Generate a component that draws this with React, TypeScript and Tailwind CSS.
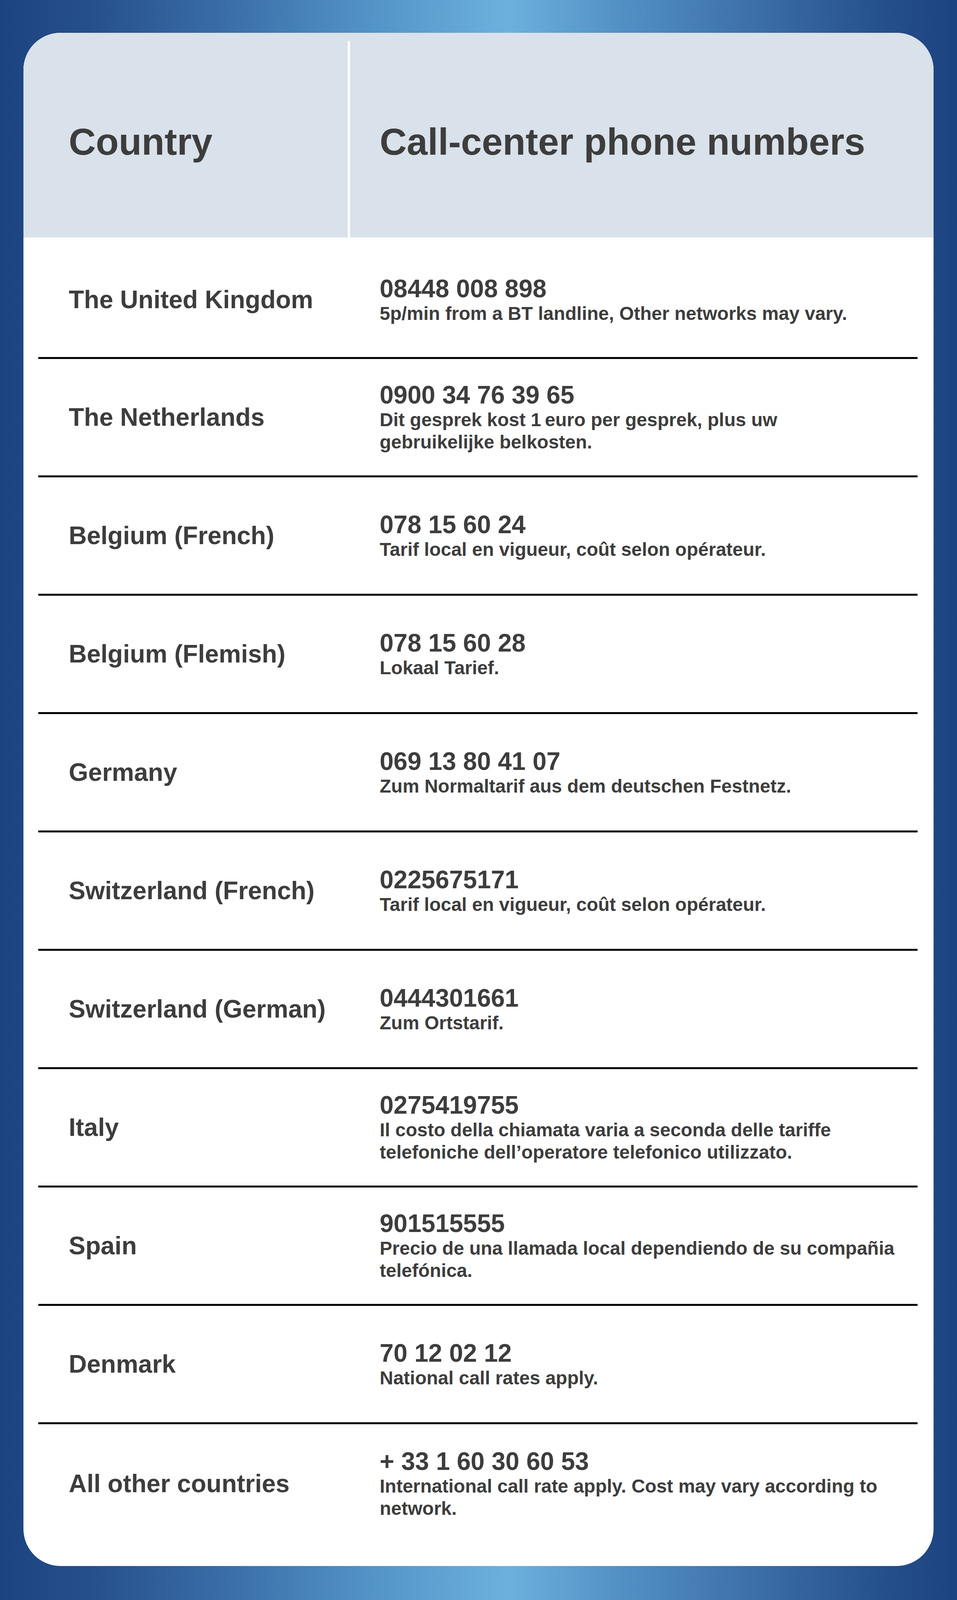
type Row = {
  country: string;
  phone: string;
  notes: string[];
};

const rows: Row[] = [
  { country: 'The United Kingdom', phone: '08448 008 898', notes: ['5p/min from a BT landline, Other networks may vary.'] },
  {
    country: 'The Netherlands',
    phone: '0900 34 76 39 65',
    notes: ['Dit gesprek kost 1\u2009euro per gesprek, plus uw', 'gebruikelijke belkosten.'],
  },
  { country: 'Belgium (French)', phone: '078 15 60 24', notes: ['Tarif local en vigueur, coût selon opérateur.'] },
  { country: 'Belgium (Flemish)', phone: '078 15 60 28', notes: ['Lokaal Tarief.'] },
  { country: 'Germany', phone: '069 13 80 41 07', notes: ['Zum Normaltarif aus dem deutschen Festnetz.'] },
  { country: 'Switzerland (French)', phone: '0225675171', notes: ['Tarif local en vigueur, coût selon opérateur.'] },
  { country: 'Switzerland (German)', phone: '0444301661', notes: ['Zum Ortstarif.'] },
  {
    country: 'Italy',
    phone: '0275419755',
    notes: ['Il costo della chiamata varia a seconda delle tariffe', 'telefoniche dell’operatore telefonico utilizzato.'],
  },
  {
    country: 'Spain',
    phone: '901515555',
    notes: ['Precio de una llamada local dependiendo de su compañia', 'telefónica.'],
  },
  { country: 'Denmark', phone: '70 12 02 12', notes: ['National call rates apply.'] },
  {
    country: 'All other countries',
    phone: '+ 33 1 60 30 60 53',
    notes: ['International call rate apply. Cost may vary according to', 'network.'],
  },
];

function TableRow({ row, first, last }: { row: Row; first: boolean; last: boolean }) {
  return (
    <div
      className={`flex items-center ${first ? 'h-[311px] pt-[12px]' : 'h-[303px]'} ${
        last ? 'h-[298px]' : 'border-b-[5px] border-black'
      }`}
    >
      <div className="w-[796px] pl-[78px] text-[64px] font-bold leading-[70px]">{row.country}</div>
      <div className="flex-1 pl-[78px]">
        <div className="text-[64px] font-bold leading-[70px]">{row.phone}</div>
        {row.notes.map((line) => (
          <div key={line} className="whitespace-nowrap text-[48px] font-bold leading-[57px]">
            {line}
          </div>
        ))}
      </div>
    </div>
  );
}

export default function App() {
  return (
    <div
      className="h-[4100px] w-[2450px] bg-[linear-gradient(90deg,#1c4380_0%,#26508c_10%,#3c71ab_25%,#5596c9_40%,#6cb1de_53%,#5290c4_65%,#3a6ca6_80%,#25508b_92%,#1c4380_100%)] px-[60px] pt-[84px] text-[#3d3d3d]"
      style={{ fontFamily: '"Liberation Sans", Arial, Helvetica, sans-serif' }}
    >
      <div className="h-[3925px] overflow-hidden rounded-[95px] bg-white">
        <div className="flex h-[524px] bg-[#d9e1ea]">
          <div className="flex w-[830px] items-center pl-[116px] pt-[34px] text-[96px] font-bold">Country</div>
          <div className="mt-[21px] w-[6px] rounded-t-full bg-white" />
          <div className="flex flex-1 items-center pl-[76px] pt-[34px] text-[96px] font-bold">
            Call-center phone numbers
          </div>
        </div>
        <div className="ml-[38px] mr-[41px]">
          {rows.map((row, i) => (
            <TableRow key={row.country} row={row} first={i === 0} last={i === rows.length - 1} />
          ))}
        </div>
      </div>
    </div>
  );
}
